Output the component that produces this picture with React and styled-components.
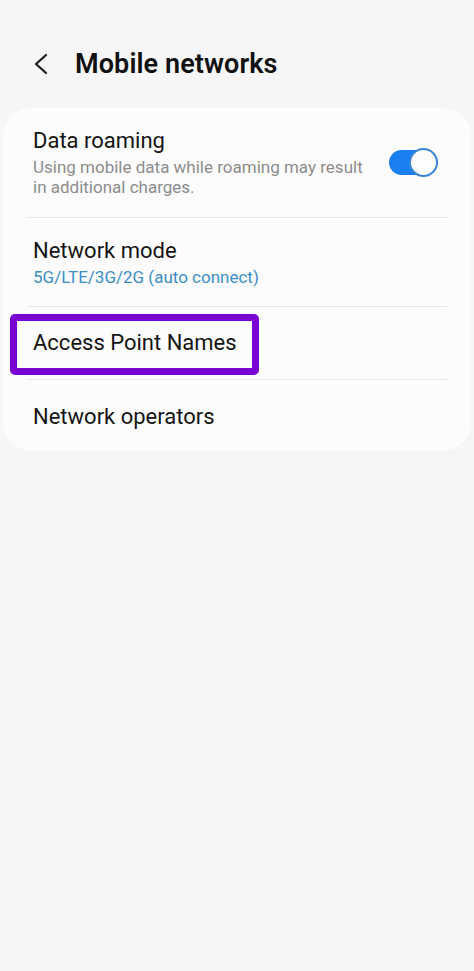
import React from 'react';
import styled, { createGlobalStyle } from 'styled-components';

const GlobalStyle = createGlobalStyle`
  html, body {
    margin: 0;
    padding: 0;
    background: #f6f6f6;
  }
  body {
    font-family: Roboto, "Liberation Sans", sans-serif;
    -webkit-font-smoothing: antialiased;
  }
`;

const Screen = styled.div`
  width: 474px;
  height: 971px;
  background: #f6f6f6;
  padding: 0 3px;
  box-sizing: border-box;
`;

const Header = styled.div`
  display: flex;
  align-items: center;
  height: 108px;
  padding: 20px 0 0 24px;
  box-sizing: border-box;
`;

const BackButton = styled.div`
  width: 28px;
  height: 28px;
  display: flex;
  align-items: center;
  justify-content: center;
  margin-right: 20px;
`;

const Title = styled.h1`
  margin: 0;
  font-size: 27px;
  font-weight: 600;
  color: #111;
  letter-spacing: 0.1px;
`;

const Card = styled.div`
  background: #fcfcfc;
  border-radius: 28px;
  overflow: hidden;
`;

const Row = styled.div`
  position: relative;
  display: flex;
  align-items: center;
  padding: ${p => p.$pad || '19px 34px 20px 30px'};
`;

const Divided = styled.div`
  margin: 0 24px;
  border-top: 1px solid #e4e4e4;
`;

const RowText = styled.div`
  flex: 1;
  min-width: 0;
`;

const Label = styled.div`
  font-size: 22px;
  line-height: 28px;
  color: #141414;
`;

const Sub = styled.div`
  font-size: 17px;
  line-height: 20px;
  margin-top: 2px;
  color: ${p => (p.$accent ? '#3b8ec6' : '#8c8c8c')};
`;

const Toggle = styled.div`
  position: relative;
  width: 48px;
  height: 25px;
  border-radius: 13px;
  background: #1a7ff0;
  margin-left: 20px;
  flex-shrink: 0;
`;

const Knob = styled.div`
  position: absolute;
  right: -1px;
  top: -2px;
  width: 25px;
  height: 25px;
  border-radius: 50%;
  background: #fdfdfd;
  border: 2px solid #3a86d6;
`;

const Highlight = styled.div`
  position: absolute;
  left: 7px;
  top: 7px;
  width: 249px;
  height: 61px;
  box-sizing: border-box;
  border: 7.5px solid #7a05d2;
  border-radius: 5px;
  pointer-events: none;
`;

const Chevron = () => (
  <svg width="16" height="22" viewBox="0 0 16 22">
    <path d="M13 2 L3 11 L13 20" fill="none" stroke="#1b1b1b" strokeWidth="2.2" strokeLinecap="round" strokeLinejoin="round" />
  </svg>
);

export default function App() {
  return (
    <Screen>
      <GlobalStyle />
      <Header>
        <BackButton>
          <Chevron />
        </BackButton>
        <Title>Mobile networks</Title>
      </Header>
      <Card>
        <Row>
          <RowText>
            <Label>Data roaming</Label>
            <Sub>Using mobile data while roaming may result in additional charges.</Sub>
          </RowText>
          <Toggle>
            <Knob />
          </Toggle>
        </Row>
        <Divided />
        <Row $pad="19px 30px 19px 30px">
          <RowText>
            <Label>Network mode</Label>
            <Sub $accent>5G/LTE/3G/2G (auto connect)</Sub>
          </RowText>
        </Row>
        <Divided />
        <Row $pad="22px 30px 22px 30px">
          <RowText>
            <Label>Access Point Names</Label>
          </RowText>
          <Highlight />
        </Row>
        <Divided />
        <Row $pad="23px 30px 20px 30px">
          <RowText>
            <Label>Network operators</Label>
          </RowText>
        </Row>
      </Card>
    </Screen>
  );
}
